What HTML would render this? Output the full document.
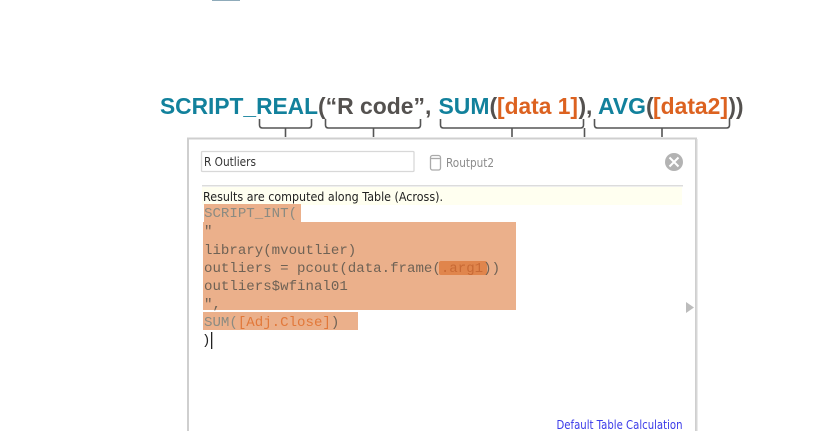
<!DOCTYPE html>
<html>
<head>
<meta charset="utf-8">
<style>
html,body{margin:0;padding:0;background:#fff;width:821px;height:431px;overflow:hidden}
svg{display:block;filter:blur(0.3px)}
text{white-space:pre}
.t{font-family:"Liberation Sans",sans-serif;font-weight:bold;font-size:23px}
.u{font-family:"DejaVu Sans","Liberation Sans",sans-serif;font-size:12px}
.m{font-family:"Liberation Mono",monospace;font-size:14.1px;fill:#6f6255}
</style>
</head>
<body>
<svg width="821" height="431" viewBox="0 0 821 431" xmlns="http://www.w3.org/2000/svg">
<rect width="821" height="431" fill="#fff"/>
<rect x="212" y="0" width="28" height="1" fill="#8fabba"/>

<!-- heading -->
<text class="t" x="160" y="114" fill="#12819c" textLength="158" lengthAdjust="spacingAndGlyphs">SCRIPT_REAL</text>
<text class="t" x="318" y="114" fill="#54514f" textLength="107" lengthAdjust="spacingAndGlyphs">(“R code”</text>
<text class="t" x="425" y="114" fill="#54514f">,</text>
<text class="t" x="438.500" y="114" fill="#12819c" textLength="51" lengthAdjust="spacingAndGlyphs">SUM</text>
<text class="t" x="489.500" y="114" fill="#54514f">(</text>
<text class="t" x="497" y="114" fill="#dc6220" textLength="81" lengthAdjust="spacingAndGlyphs">[data 1]</text>
<text class="t" x="578.500" y="114" fill="#54514f">)</text>
<text class="t" x="586" y="114" fill="#54514f">,</text>
<text class="t" x="598" y="114" fill="#12819c" textLength="48" lengthAdjust="spacingAndGlyphs">AVG</text>
<text class="t" x="646" y="114" fill="#54514f">(</text>
<text class="t" x="653" y="114" fill="#dc6220" textLength="75" lengthAdjust="spacingAndGlyphs">[data2]</text>
<text class="t" x="728.500" y="114" fill="#54514f" textLength="15" lengthAdjust="spacingAndGlyphs">))</text>

<!-- braces -->
<g fill="none" stroke="#555" stroke-width="1.6">
<path d="M259.500 119v6q0 3 3 3h46q3 0 3-3v-6M285.500 128v9"/>
<path d="M325.500 119v6q0 3 3 3h89q3 0 3-3v-6M373.500 128v9"/>
<path d="M440.500 119v6q0 3 3 3h137q3 0 3-3v-6M512 128v9"/>
<path d="M594.500 119v6q0 3 3 3h129q3 0 3-3v-6M662 128v9"/>
<path d="M584.500 128v9"/>
</g>

<!-- dialog -->
<path d="M188 431V138.500H696V431" fill="#fff" stroke="#cfcfcf" stroke-width="2"/>
<rect x="696" y="139" width="1.500" height="292" fill="#d6d6d6"/>

<rect x="201.500" y="151.500" width="212.500" height="20" rx="1" fill="#fff" stroke="#d8d8d8" stroke-width="1.300"/>
<text class="u" x="204" y="166" fill="#333" textLength="52" lengthAdjust="spacingAndGlyphs">R Outliers</text>

<g fill="none" stroke="#aaa" stroke-width="1.300">
<rect x="430.500" y="155.500" width="10" height="14.500" rx="2"/>
<path d="M430.500 158.500h10"/>
</g>
<text class="u" x="446" y="167" fill="#8b8b8b" textLength="48" lengthAdjust="spacingAndGlyphs">Routput2</text>

<circle cx="674" cy="162" r="9" fill="#b3b3b3"/>
<path d="M669.500 157.500l9 9M678.500 157.500l-9 9" stroke="#fff" stroke-width="2" fill="none"/>

<rect x="202" y="185" width="481" height="1.500" fill="#dcdcdc"/>
<rect x="202" y="187" width="480" height="18" fill="#fffff0"/>
<text class="u" x="203" y="201" fill="#222" textLength="240" lengthAdjust="spacingAndGlyphs">Results are computed along Table (Across).</text>

<!-- highlights -->
<g fill="#ebb08b">
<rect x="204" y="204" width="97" height="18"/>
<rect x="203" y="222" width="313" height="88"/>
<rect x="203" y="312" width="155" height="18"/>
</g>
<rect x="439" y="261" width="48" height="14" rx="2" fill="#e0854c"/>

<!-- code -->
<text class="m" x="204" y="217" style="fill:#8b8b82">SCRIPT_INT(</text>
<text class="m" x="204" y="235">"</text>
<text class="m" x="204" y="254">library(mvoutlier)</text>
<text class="m" x="204" y="272">outliers = pcout(data.frame(<tspan style="fill:#c86a35">.arg1</tspan>))</text>
<text class="m" x="204" y="290">outliers$wfinal01</text>
<text class="m" x="204" y="308">",</text>
<text class="m" x="204" y="326"><tspan style="fill:#8b8b82">SUM(</tspan><tspan style="fill:#e2783a">[Adj.Close]</tspan>)</text>
<text class="m" x="202" y="344" style="fill:#222">)</text>
<rect x="211" y="332" width="1.300" height="17" fill="#222"/>

<path d="M686 302l8 5.500-8 5.500z" fill="#bcbcbc"/>

<text class="u" x="556.500" y="429" fill="#3a3ae8" textLength="126" lengthAdjust="spacingAndGlyphs">Default Table Calculation</text>
</svg>
</body>
</html>
